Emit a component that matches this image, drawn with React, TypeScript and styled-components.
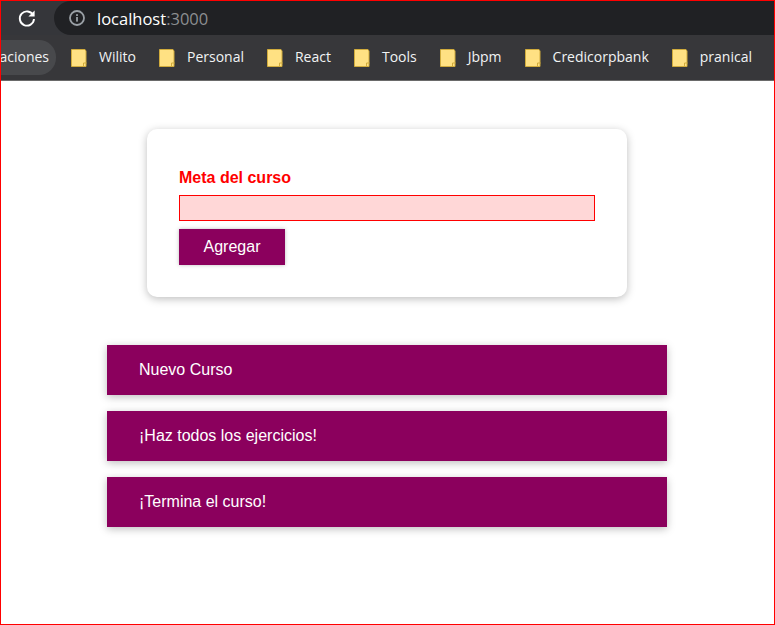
import styled, { createGlobalStyle } from 'styled-components';

const GlobalStyle = createGlobalStyle`
  * { box-sizing: border-box; }
  html, body { margin: 0; padding: 0; background: #fff; }
`;

const Frame = styled.div`
  width: 775px;
  height: 625px;
  border: 1px solid #f00;
  overflow: hidden;
  background: #fff;
  font-family: 'Liberation Sans', Arial, sans-serif;
`;

const Toolbar = styled.div`
  height: 34px;
  background: #35363a;
  display: flex;
  padding-left: 15px;
`;

const ReloadButton = styled.div`
  width: 22px;
  height: 34px;
  display: flex;
  align-items: center;
  justify-content: center;
  margin-right: 16px;
`;

const AddressBar = styled.div`
  flex: 1;
  height: 34px;
  background: #202124;
  border-radius: 17px 0 0 17px;
  display: flex;
  align-items: center;
  gap: 12px;
  padding-left: 15px;
  font-family: 'Open Sans', sans-serif;
  font-size: 16.5px;
  color: #fff;
`;

const Port = styled.span`
  color: #8c8e91;
`;

const BookmarksBar = styled.div`
  height: 46px;
  background: #37373a;
  border-bottom: 1px solid #6a6a6a;
  display: flex;
  align-items: center;
  font-family: 'Open Sans', sans-serif;
  font-size: 14px;
  color: #f1f3f4;
`;

const AppsChip = styled.div`
  width: 55px;
  height: 35px;
  background: #48494c;
  border-radius: 0 17px 17px 0;
  display: flex;
  align-items: center;
  justify-content: flex-end;
  padding: 0 7px 1px 0;
  margin-right: 15px;
  margin-top: -1px;
`;

const Bookmark = styled.div`
  display: flex;
  align-items: center;
  gap: 12px;
  margin-right: 23px;
  white-space: nowrap;
`;

const BookmarkName = styled.span`
  margin-top: -2px;
`;

const Page = styled.main`
  display: flex;
  flex-direction: column;
  align-items: center;
  padding: 48px 1px 0 0;
`;

const FormCard = styled.form`
  width: 480px;
  height: 168px;
  padding: 40px 32px 32px;
  background: #fff;
  border-radius: 10px;
  box-shadow: 0 2px 8px rgba(0, 0, 0, 0.26);
`;

const Label = styled.label`
  display: block;
  font-size: 16px;
  line-height: 18px;
  font-weight: bold;
  color: #f00;
  margin-bottom: 8px;
`;

const GoalInput = styled.input`
  display: block;
  width: 100%;
  height: 26px;
  padding: 0 4px;
  border: 1px solid #f00;
  background: #ffd7d7;
  outline: none;
  font: inherit;
  margin-bottom: 8px;
`;

const SubmitButton = styled.button`
  display: block;
  width: 106px;
  height: 36px;
  padding: 0;
  border: 1px solid #8b005d;
  background: #8b005d;
  color: #fff;
  font-family: inherit;
  font-size: 16px;
  box-shadow: 0 0 4px rgba(0, 0, 0, 0.26);
`;

const GoalList = styled.ul`
  list-style: none;
  margin: 48px 0 0;
  padding: 0;
  width: 560px;
  display: flex;
  flex-direction: column;
  gap: 16px;
`;

const GoalItem = styled.li`
  height: 50px;
  padding: 0 32px;
  display: flex;
  align-items: center;
  background: #8b005d;
  color: #fff;
  font-size: 16px;
  box-shadow: 0 2px 8px rgba(0, 0, 0, 0.26);
`;

function ReloadIcon() {
  return (
    <svg width="20" height="20" viewBox="0 0 20 20" fill="none">
      <path d="M16.2 7.2A7.1 7.1 0 1 0 17 11" stroke="#fff" strokeWidth="1.9" />
      <path d="M17.6 2.4v6.2h-6.2z" fill="#fff" />
    </svg>
  );
}

function InfoIcon() {
  return (
    <svg width="16" height="16" viewBox="0 0 16 16" fill="none">
      <circle cx="8" cy="8" r="7" stroke="#9aa0a6" strokeWidth="1.8" />
      <rect x="7.1" y="7" width="1.8" height="4.6" fill="#9aa0a6" />
      <rect x="7.1" y="4.2" width="1.8" height="1.8" fill="#9aa0a6" />
    </svg>
  );
}

function FolderIcon() {
  return (
    <svg width="16" height="18" viewBox="0 0 16 18" fill="none">
      <path d="M.5.5h13.5l1 1.5v15.5H.5z" fill="#ffe183" stroke="#d0ab3c" />
      <path d="M12.5 17.5v-3.5h3" stroke="#d0ab3c" />
    </svg>
  );
}

const bookmarks = ['Wilito', 'Personal', 'React', 'Tools', 'Jbpm', 'Credicorpbank', 'pranical'];
const goals = ['Nuevo Curso', '¡Haz todos los ejercicios!', '¡Termina el curso!'];

export default function App() {
  return (
    <>
      <GlobalStyle />
      <Frame>
        <Toolbar>
          <ReloadButton>
            <ReloadIcon />
          </ReloadButton>
          <AddressBar>
            <InfoIcon />
            <span>
              localhost<Port>:3000</Port>
            </span>
          </AddressBar>
        </Toolbar>
        <BookmarksBar>
          <AppsChip>aciones</AppsChip>
          {bookmarks.map((name) => (
            <Bookmark key={name}>
              <FolderIcon />
              <BookmarkName>{name}</BookmarkName>
            </Bookmark>
          ))}
        </BookmarksBar>
        <Page>
          <FormCard>
            <Label>Meta del curso</Label>
            <GoalInput type="text" />
            <SubmitButton type="button">Agregar</SubmitButton>
          </FormCard>
          <GoalList>
            {goals.map((goal) => (
              <GoalItem key={goal}>{goal}</GoalItem>
            ))}
          </GoalList>
        </Page>
      </Frame>
    </>
  );
}
